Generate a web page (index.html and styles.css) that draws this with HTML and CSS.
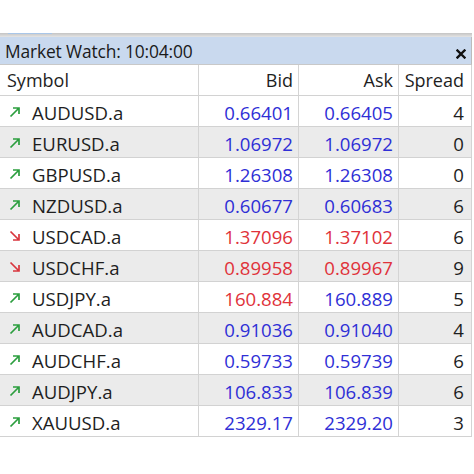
FILE: index.html
```html
<!DOCTYPE html>
<html>
<head>
<meta charset="utf-8">
<link rel="stylesheet" href="styles.css">
</head>
<body>
<div class="window">
  <div class="topline"><span class="tab"></span></div>
  <div class="title">
    <span class="title-text">Market Watch: 10:04:00</span>
    <svg class="close" width="10" height="10" viewBox="0 0 10 10"><path d="M1.5 1.5L8.5 8.5M8.5 1.5L1.5 8.5" stroke="#111" stroke-width="2.4" stroke-linecap="square"/></svg>
  </div>
  <div class="grid">
    <div class="cell head sym">Symbol</div>
    <div class="cell head num">Bid</div>
    <div class="cell head num">Ask</div>
    <div class="cell head num sp">Spread</div>
  </div>
  <div id="rows"></div>
</div>
<script>
const data = [
  ["AUDUSD.a","0.66401","0.66405","4","u","b","b"],
  ["EURUSD.a","1.06972","1.06972","0","u","b","b"],
  ["GBPUSD.a","1.26308","1.26308","0","u","b","b"],
  ["NZDUSD.a","0.60677","0.60683","6","u","b","b"],
  ["USDCAD.a","1.37096","1.37102","6","d","r","r"],
  ["USDCHF.a","0.89958","0.89967","9","d","r","r"],
  ["USDJPY.a","160.884","160.889","5","u","r","b"],
  ["AUDCAD.a","0.91036","0.91040","4","u","b","b"],
  ["AUDCHF.a","0.59733","0.59739","6","u","b","b"],
  ["AUDJPY.a","106.833","106.839","6","u","b","b"],
  ["XAUUSD.a","2329.17","2329.20","3","u","b","b"]
];
const up = '<svg class="arr" width="12" height="12" viewBox="0 0 12 12"><path d="M1.5 10.5L10 2M4 2H10V8" fill="none" stroke="#2b9e3e" stroke-width="1.7"/></svg>';
const dn = '<svg class="arr" width="12" height="12" viewBox="0 0 12 12"><path d="M1.5 1.5L10 10M4 10H10V4" fill="none" stroke="#d9363e" stroke-width="1.7"/></svg>';
const rows = document.getElementById('rows');
data.forEach((d, i) => {
  const g = document.createElement('div');
  g.className = 'grid row' + (i % 2 ? ' alt' : '');
  g.innerHTML =
    '<div class="cell sym">' + (d[4] === 'u' ? up : dn) + '<span>' + d[0] + '</span></div>' +
    '<div class="cell num ' + d[5] + '">' + d[1] + '</div>' +
    '<div class="cell num ' + d[6] + '">' + d[2] + '</div>' +
    '<div class="cell num sp">' + d[3] + '</div>';
  rows.appendChild(g);
});
</script>
</body>
</html>
```
FILE: styles.css
```css
html, body {
  margin: 0;
  padding: 0;
  background: #fff;
}
body {
  font-family: "Open Sans", "Noto Sans", sans-serif;
  color: #1e1e1e;
}
.window {
  margin-top: 33px;
  width: 472px;
}
.topline {
  position: relative;
  height: 4px;
  background: linear-gradient(#c4c4c4, #e4e4e4);
}
.tab {
  position: absolute;
  left: 8px;
  top: 0;
  width: 44px;
  height: 1px;
  background: #a9c6e8;
}
.title {
  height: 27px;
  background: #c9d9ee;
  display: flex;
  align-items: center;
  justify-content: space-between;
  padding: 0 5px 0 5px;
  border-right: 1px solid #bcbcbc;
  border-bottom: 1px solid #c8c8c8;
}
.title-text {
  font-size: 17.4px;
  letter-spacing: -0.15px;
  color: #1a1a1a;
}
.close {
  margin-top: 6px;
}
.grid {
  display: grid;
  grid-template-columns: 199px 100px 100px 73px;
  height: 31px;
  box-sizing: border-box;
  border-bottom: 1px solid #d2d2d2;
}
.row.alt {
  background: #ebebeb;
}
.cell {
  display: flex;
  align-items: center;
  font-size: 18.6px;
  border-right: 1px solid #d4d4d4;
  box-sizing: border-box;
  white-space: nowrap;
}
.cell.head {
  font-size: 18px;
}
.cell.sym {
  padding-left: 7px;
}
.row .cell.sym {
  padding-left: 9px;
  gap: 11px;
  padding-top: 2px;
}
.row .cell.num {
  padding-top: 2px;
}
.arr {
  flex: none;
}
.cell.num {
  justify-content: flex-end;
  padding-right: 5px;
}
.cell.sp {
  padding-right: 7px;
}
.head {
  color: #1e1e1e;
}
.b {
  color: #2f2fd6;
}
.r {
  color: #e0323a;
}
```
